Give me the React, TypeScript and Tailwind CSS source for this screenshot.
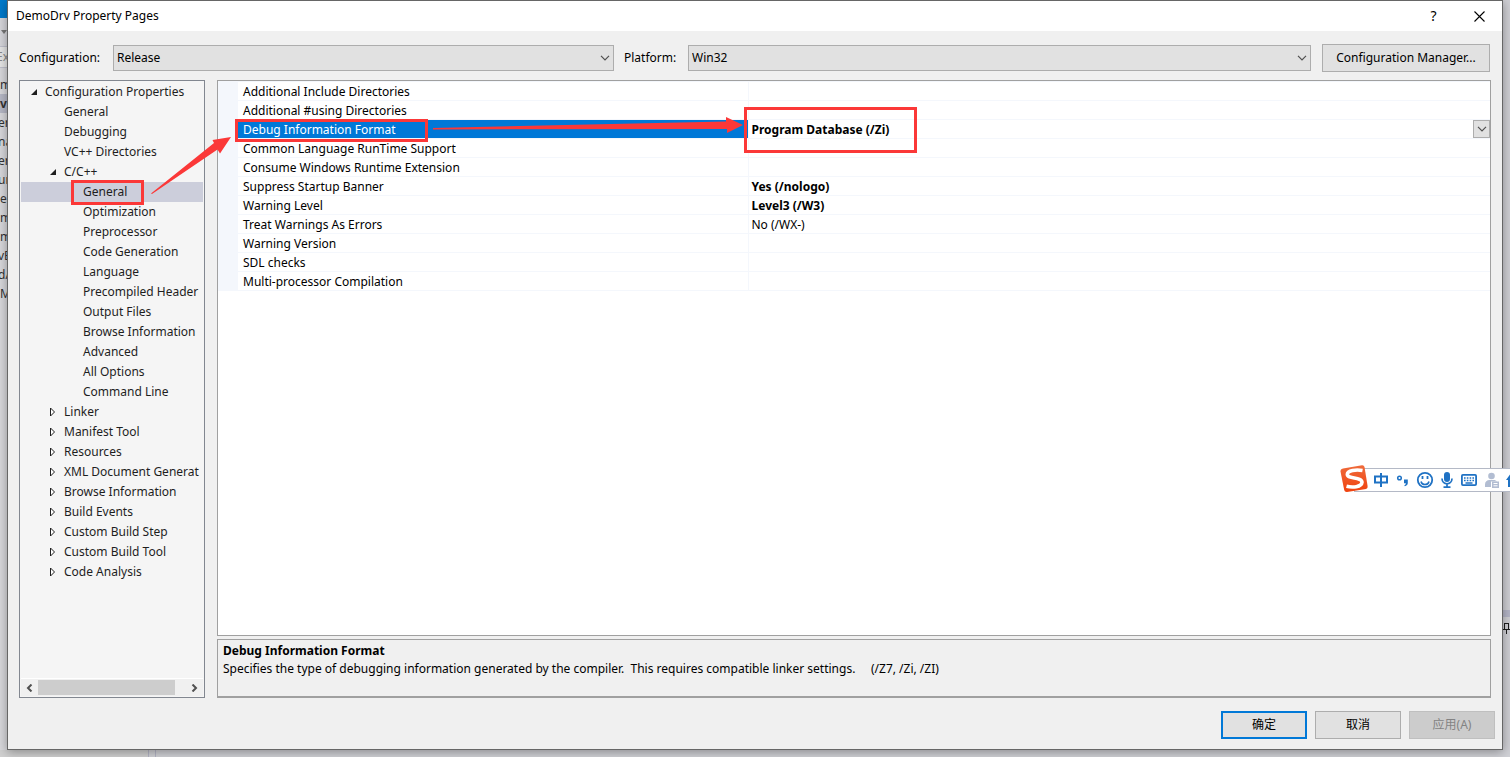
import React from "react";

type TreeItem = { label: string; level: 0 | 1 | 2; state?: "open" | "closed"; selected?: boolean };

const tree: TreeItem[] = [
  { label: "Configuration Properties", level: 0, state: "open" },
  { label: "General", level: 1 },
  { label: "Debugging", level: 1 },
  { label: "VC++ Directories", level: 1 },
  { label: "C/C++", level: 1, state: "open" },
  { label: "General", level: 2, selected: true },
  { label: "Optimization", level: 2 },
  { label: "Preprocessor", level: 2 },
  { label: "Code Generation", level: 2 },
  { label: "Language", level: 2 },
  { label: "Precompiled Header", level: 2 },
  { label: "Output Files", level: 2 },
  { label: "Browse Information", level: 2 },
  { label: "Advanced", level: 2 },
  { label: "All Options", level: 2 },
  { label: "Command Line", level: 2 },
  { label: "Linker", level: 1, state: "closed" },
  { label: "Manifest Tool", level: 1, state: "closed" },
  { label: "Resources", level: 1, state: "closed" },
  { label: "XML Document Generat", level: 1, state: "closed" },
  { label: "Browse Information", level: 1, state: "closed" },
  { label: "Build Events", level: 1, state: "closed" },
  { label: "Custom Build Step", level: 1, state: "closed" },
  { label: "Custom Build Tool", level: 1, state: "closed" },
  { label: "Code Analysis", level: 1, state: "closed" },
];

const levelPadding = ["pl-1", "pl-[23px]", "pl-[42px]"];

type Property = { name: string; value?: string; bold?: boolean; selected?: boolean };

const properties: Property[] = [
  { name: "Additional Include Directories" },
  { name: "Additional #using Directories" },
  { name: "Debug Information Format", value: "Program Database (/Zi)", bold: true, selected: true },
  { name: "Common Language RunTime Support" },
  { name: "Consume Windows Runtime Extension" },
  { name: "Suppress Startup Banner", value: "Yes (/nologo)", bold: true },
  { name: "Warning Level", value: "Level3 (/W3)", bold: true },
  { name: "Treat Warnings As Errors", value: "No (/WX-)" },
  { name: "Warning Version" },
  { name: "SDL checks" },
  { name: "Multi-processor Compilation" },
];

const explorerRows = ["m", "v", "er", "na", "er", "ur", "e", "m", "m", "vE", "dA", "M"];

function Chevron({ className }: { className: string }) {
  return (
    <svg className={className} width="10" height="6" viewBox="0 0 10 6" fill="none" stroke="#505050" strokeWidth="1.2" aria-hidden="true">
      <path d="M1 0.8 5 4.8 9 0.8" />
    </svg>
  );
}

function Twisty({ state }: { state?: "open" | "closed" }) {
  return (
    <span className="flex w-5 shrink-0 pl-[5px]">
      {state === "open" && (
        <svg width="8" height="8" viewBox="0 0 8 8" aria-hidden="true">
          <path d="M7 1v6H1z" fill="#1e1e1e" />
        </svg>
      )}
      {state === "closed" && (
        <svg width="8" height="10" viewBox="0 0 8 10" aria-hidden="true">
          <path d="M1.500 1v8l4-4z" fill="#fff" stroke="#1e1e1e" />
        </svg>
      )}
    </span>
  );
}

function Picker({ id, label, value, grow, labelClass }: { id: string; label: string; value: string; grow: string; labelClass: string }) {
  return (
    <>
      <label htmlFor={id} className={labelClass}>
        {label}
      </label>
      <div className={`relative ${grow}`}>
        <select id={id} className="block h-[26px] w-full appearance-none border border-[#adadad] bg-[#e1e1e1] px-[3px] text-black">
          <option>{value}</option>
        </select>
        <Chevron className="pointer-events-none absolute top-[10px] right-1" />
      </div>
    </>
  );
}

function Toolbar() {
  return (
    <div className="flex items-center pt-[13px] pr-3 pb-2 pl-[11px]">
      <Picker id="configuration" label="Configuration:" value="Release" grow="flex-[501]" labelClass="w-[94px] shrink-0" />
      <Picker id="platform" label="Platform:" value="Win32" grow="flex-[623]" labelClass="w-[74px] shrink-0 pl-[10px]" />
      <button className="ml-[11px] h-7 w-[168px] shrink-0 border border-[#adadad] bg-[#e1e1e1]">Configuration Manager...</button>
    </div>
  );
}

function Tree() {
  return (
    <nav className="flex w-[186px] shrink-0 flex-col border border-[#828790] bg-[#f5f5f5] p-px text-[#1e1e1e]">
      <ul className="flex-1 overflow-hidden">
        {tree.map((item, i) => (
          <li key={i} className={`flex h-5 items-center whitespace-nowrap ${levelPadding[item.level]} ${item.selected ? "bg-[#cccedb]" : ""}`}>
            <Twisty state={item.state} />
            <span>{item.label}</span>
          </li>
        ))}
      </ul>
      <div className="flex h-[18px] items-center border-t border-white bg-[#f0f0f0]">
        <button aria-label="Scroll left" className="flex w-[17px] justify-center">
          <svg width="7" height="8" viewBox="0 0 7 8" fill="none" stroke="#505050" strokeWidth="2">
            <path d="M5.500 .5 2 4l3.500 3.500" />
          </svg>
        </button>
        <div className="flex h-[15px] flex-1">
          <div className="w-[137px] bg-[#cdcdcd]" />
        </div>
        <button aria-label="Scroll right" className="flex w-[17px] justify-center">
          <svg width="7" height="8" viewBox="0 0 7 8" fill="none" stroke="#505050" strokeWidth="2">
            <path d="M1.500 .5 5 4 1.500 7.500" />
          </svg>
        </button>
      </div>
    </nav>
  );
}

function PropertyGrid() {
  return (
    <div className="flex-1 border border-[#a0a0a0] bg-white">
      <table className="w-full table-fixed border-collapse">
        <colgroup>
          <col className="w-5" />
          <col className="w-[510px]" />
          <col />
        </colgroup>
        <tbody>
          {properties.map((p) => (
            <tr key={p.name} className="h-[19px] border-y border-[#f4f7fc]">
              <td className="bg-[#f4f7fc] p-0" />
              <td className={`border-r border-[#f4f7fc] p-0 pt-px pl-[5px] leading-[17px] ${p.selected ? "bg-[#0078d7] text-white" : ""}`}>{p.name}</td>
              <td className={`p-0 pl-[3px] leading-[17px] ${p.bold ? "font-bold" : ""}`}>
                <div className="flex items-center justify-between">
                  <span className="pt-px">{p.value}</span>
                  {p.selected && (
                    <button aria-label="Open list" className="flex h-[18px] w-[17px] items-center justify-center border border-[#adadad] bg-[#e1e1e1]">
                      <Chevron className="" />
                    </button>
                  )}
                </div>
              </td>
            </tr>
          ))}
        </tbody>
      </table>
    </div>
  );
}

function Annotations() {
  return (
    <svg className="pointer-events-none absolute top-0 left-0" width="960" height="220" viewBox="8 1 960 220" fill="none" aria-hidden="true">
      <g stroke="#fb3838" strokeWidth="3">
        <rect x="72.500" y="181.500" width="70" height="22" />
        <rect x="236.500" y="120.500" width="190" height="20" />
        <rect x="745.500" y="108.500" width="170" height="43" />
      </g>
      <g fill="#fb3838">
        <path d="M151 193.500 214 143 212.500 140 231 137 220 153.500 217.500 149.500 152 194z" />
        <path d="M433 128 726 121.500V117L743 125 727 133V129L433 129.500z" />
      </g>
    </svg>
  );
}

function InputMethodBar() {
  return (
    <div className="absolute top-[464px] right-0 flex h-[30px] w-[171px] items-center overflow-hidden">
      <div className="absolute top-1 right-0 left-[15px] h-6 border border-r-0 border-[#b4b9c6] bg-white" />
      <svg className="relative" width="171" height="30" viewBox="1339 464 171 30" fill="none" stroke="#1f72c4" aria-label="Input method">
        <defs>
          <linearGradient id="logo" x1="0" y1="0" x2="0" y2="1">
            <stop offset="0" stopColor="#ef6b3b" />
            <stop offset="1" stopColor="#f0420f" />
          </linearGradient>
        </defs>
        <path d="M1343 468.500 1362 465.200Q1364 465 1364.500 467L1367.600 486Q1368 488.500 1366 489L1347 492Q1344.700 492.200 1344.200 490L1340.500 471.500Q1340.300 469 1343 468.500z" fill="url(#logo)" stroke="none" />
        <path d="M1362.500 470.500C1356 469.300 1347.500 470.500 1347.300 474.300 1347.200 479.500 1362 476.500 1362 482.300 1361.500 487.200 1352.500 487.800 1346.500 486.300" stroke="#fff" strokeWidth="3.600" />
        <path d="M1375 476.500H1387V482.500H1375zM1381 473V487" strokeWidth="2" />
        <circle cx="1399.500" cy="478" r="1.800" strokeWidth="1.500" />
        <path d="M1404 479.500h3.800v3.500c0 1.800-1.200 2.800-3 3.200l-.5-1c1-.4 1.500-1 1.500-2h-1.800z" fill="#1f72c4" stroke="none" />
        <circle cx="1425" cy="480" r="7.200" strokeWidth="1.800" />
        <path d="M1421 481.500c.8 4 7.200 4 8 0" strokeWidth="1.500" />
        <path d="M1422.500 476v3M1427.500 476v3" strokeWidth="1.800" />
        <rect x="1444" y="472" width="6" height="10" rx="3" fill="#1f72c4" stroke="none" />
        <path d="M1442 478.500c0 7 10 7 10 0M1447 484v3M1443.500 487.200h7" strokeWidth="1.700" />
        <rect x="1461.900" y="474.900" width="14.200" height="10.200" rx="1" strokeWidth="1.800" />
        <path d="M1464 478h10M1464 480.500h10" strokeWidth="1.500" strokeDasharray="1.600 1.200" />
        <path d="M1465.500 483h7" strokeWidth="1.500" />
        <g fill="#b2bdd2" stroke="none">
          <circle cx="1491.500" cy="476" r="3.300" />
          <path d="M1485 487v-2.500c0-3 2-4.500 4.500-4.500h4c1.500 0 3 .6 3.700 1.600H1491V487z" />
          <rect x="1492" y="481.500" width="7" height="6.500" />
        </g>
        <path d="M1493.500 483.500h4M1493.500 485.800h4" stroke="#fff" />
        <path d="M1506 480 1510 474.500V487h-2v-7z" fill="#1f72c4" stroke="none" />
      </svg>
    </div>
  );
}

export default function App() {
  return (
    <div className="relative flex min-h-screen flex-col overflow-hidden bg-[#d0d1d6] font-['Noto_Sans','Noto_Sans_CJK_SC',sans-serif] text-xs text-black">
      <div className="flex flex-1">
        <aside className="w-[7px] shrink-0 overflow-hidden bg-[#d8d8dc] text-[#333333]">
          <div className="h-[18px] bg-[#007acc]" />
          <div className="flex h-7 items-center bg-[#d6d6db]">
            <svg width="7" height="4" viewBox="0 0 7 4" aria-hidden="true">
              <path d="M1 0h6L4 4z" fill="#777" />
            </svg>
          </div>
          <div className="flex h-[22px] items-center border-y border-[#bfc0cc] bg-[#e6e6e6] text-[#888]">
            <span className="-ml-1">Ex</span>
          </div>
          <ul className="pt-[7px]">
            {explorerRows.map((text, i) => (
              <li key={i} className={`h-[19px] leading-[19px] ${i === 1 ? "bg-[#b6b8c6] font-bold" : ""}`}>
                <span className={text.length > 1 ? "-ml-0.5" : ""}>{text}</span>
              </li>
            ))}
          </ul>
        </aside>

        <main className="relative flex flex-1 flex-col border border-[#666666] bg-[#f0f0f0] shadow-[0_2px_10px_rgba(0,0,0,0.35)]">
          <header className="flex h-[30px] items-center bg-white pl-2">
            <h1 className="flex-1">DemoDrv Property Pages</h1>
            <button aria-label="Help" className="w-[45px] text-center text-sm">
              ?
            </button>
            <button aria-label="Close" className="flex w-[46px] justify-center">
              <svg width="11" height="11" viewBox="0 0 11 11" stroke="#000" strokeWidth="1.100" aria-hidden="true">
                <path d="M.5.5l10 10M10.500.5l-10 10" />
              </svg>
            </button>
          </header>
          <Toolbar />
          <div className="flex flex-1 gap-3 px-[11px]">
            <Tree />
            <div className="flex min-w-0 flex-1 flex-col gap-[3px]">
              <PropertyGrid />
              <section className="h-[59px] border border-b-2 border-[#a0a0a0] px-[5px] pt-0.5 leading-[18px]">
                <h2 className="font-bold">Debug Information Format</h2>
                <p className="whitespace-pre">{"Specifies the type of debugging information generated by the compiler.  This requires compatible linker settings.     (/Z7, /Zi, /ZI)"}</p>
              </section>
            </div>
          </div>
          <footer className="flex justify-end gap-2 pt-[13px] pr-[7px] pb-[10px]">
            <button className="h-7 w-[86px] border-2 border-[#0078d7] bg-[#e1e1e1]">确定</button>
            <button className="h-7 w-[86px] border border-[#adadad] bg-[#e1e1e1]">取消</button>
            <button disabled className="h-7 w-[86px] border border-[#bfbfbf] bg-[#cccccc] text-[#838383]">
              应用(A)
            </button>
          </footer>
          <Annotations />
        </main>

        <aside className="flex w-[7px] shrink-0 flex-col bg-[#cfcfd4]">
          <div className="h-[610px]" />
          <div className="h-[7px] bg-[#b5b6c8]" />
          <svg width="7" height="20" viewBox="0 0 7 20" fill="none" stroke="#1e1e1e" aria-hidden="true">
            <path d="M1.500 6.500H6M1.500 6v6M0 12.500h7M3.500 12v5M5.500 6v6" />
          </svg>
        </aside>
      </div>
      <div className="flex h-[7px]">
        <div className="w-[149px] border-r border-[#b4b5c6] bg-[#d0d0d0]" />
        <div className="w-[7px] border-r border-[#b4b5c6]" />
      </div>
      <InputMethodBar />
    </div>
  );
}
